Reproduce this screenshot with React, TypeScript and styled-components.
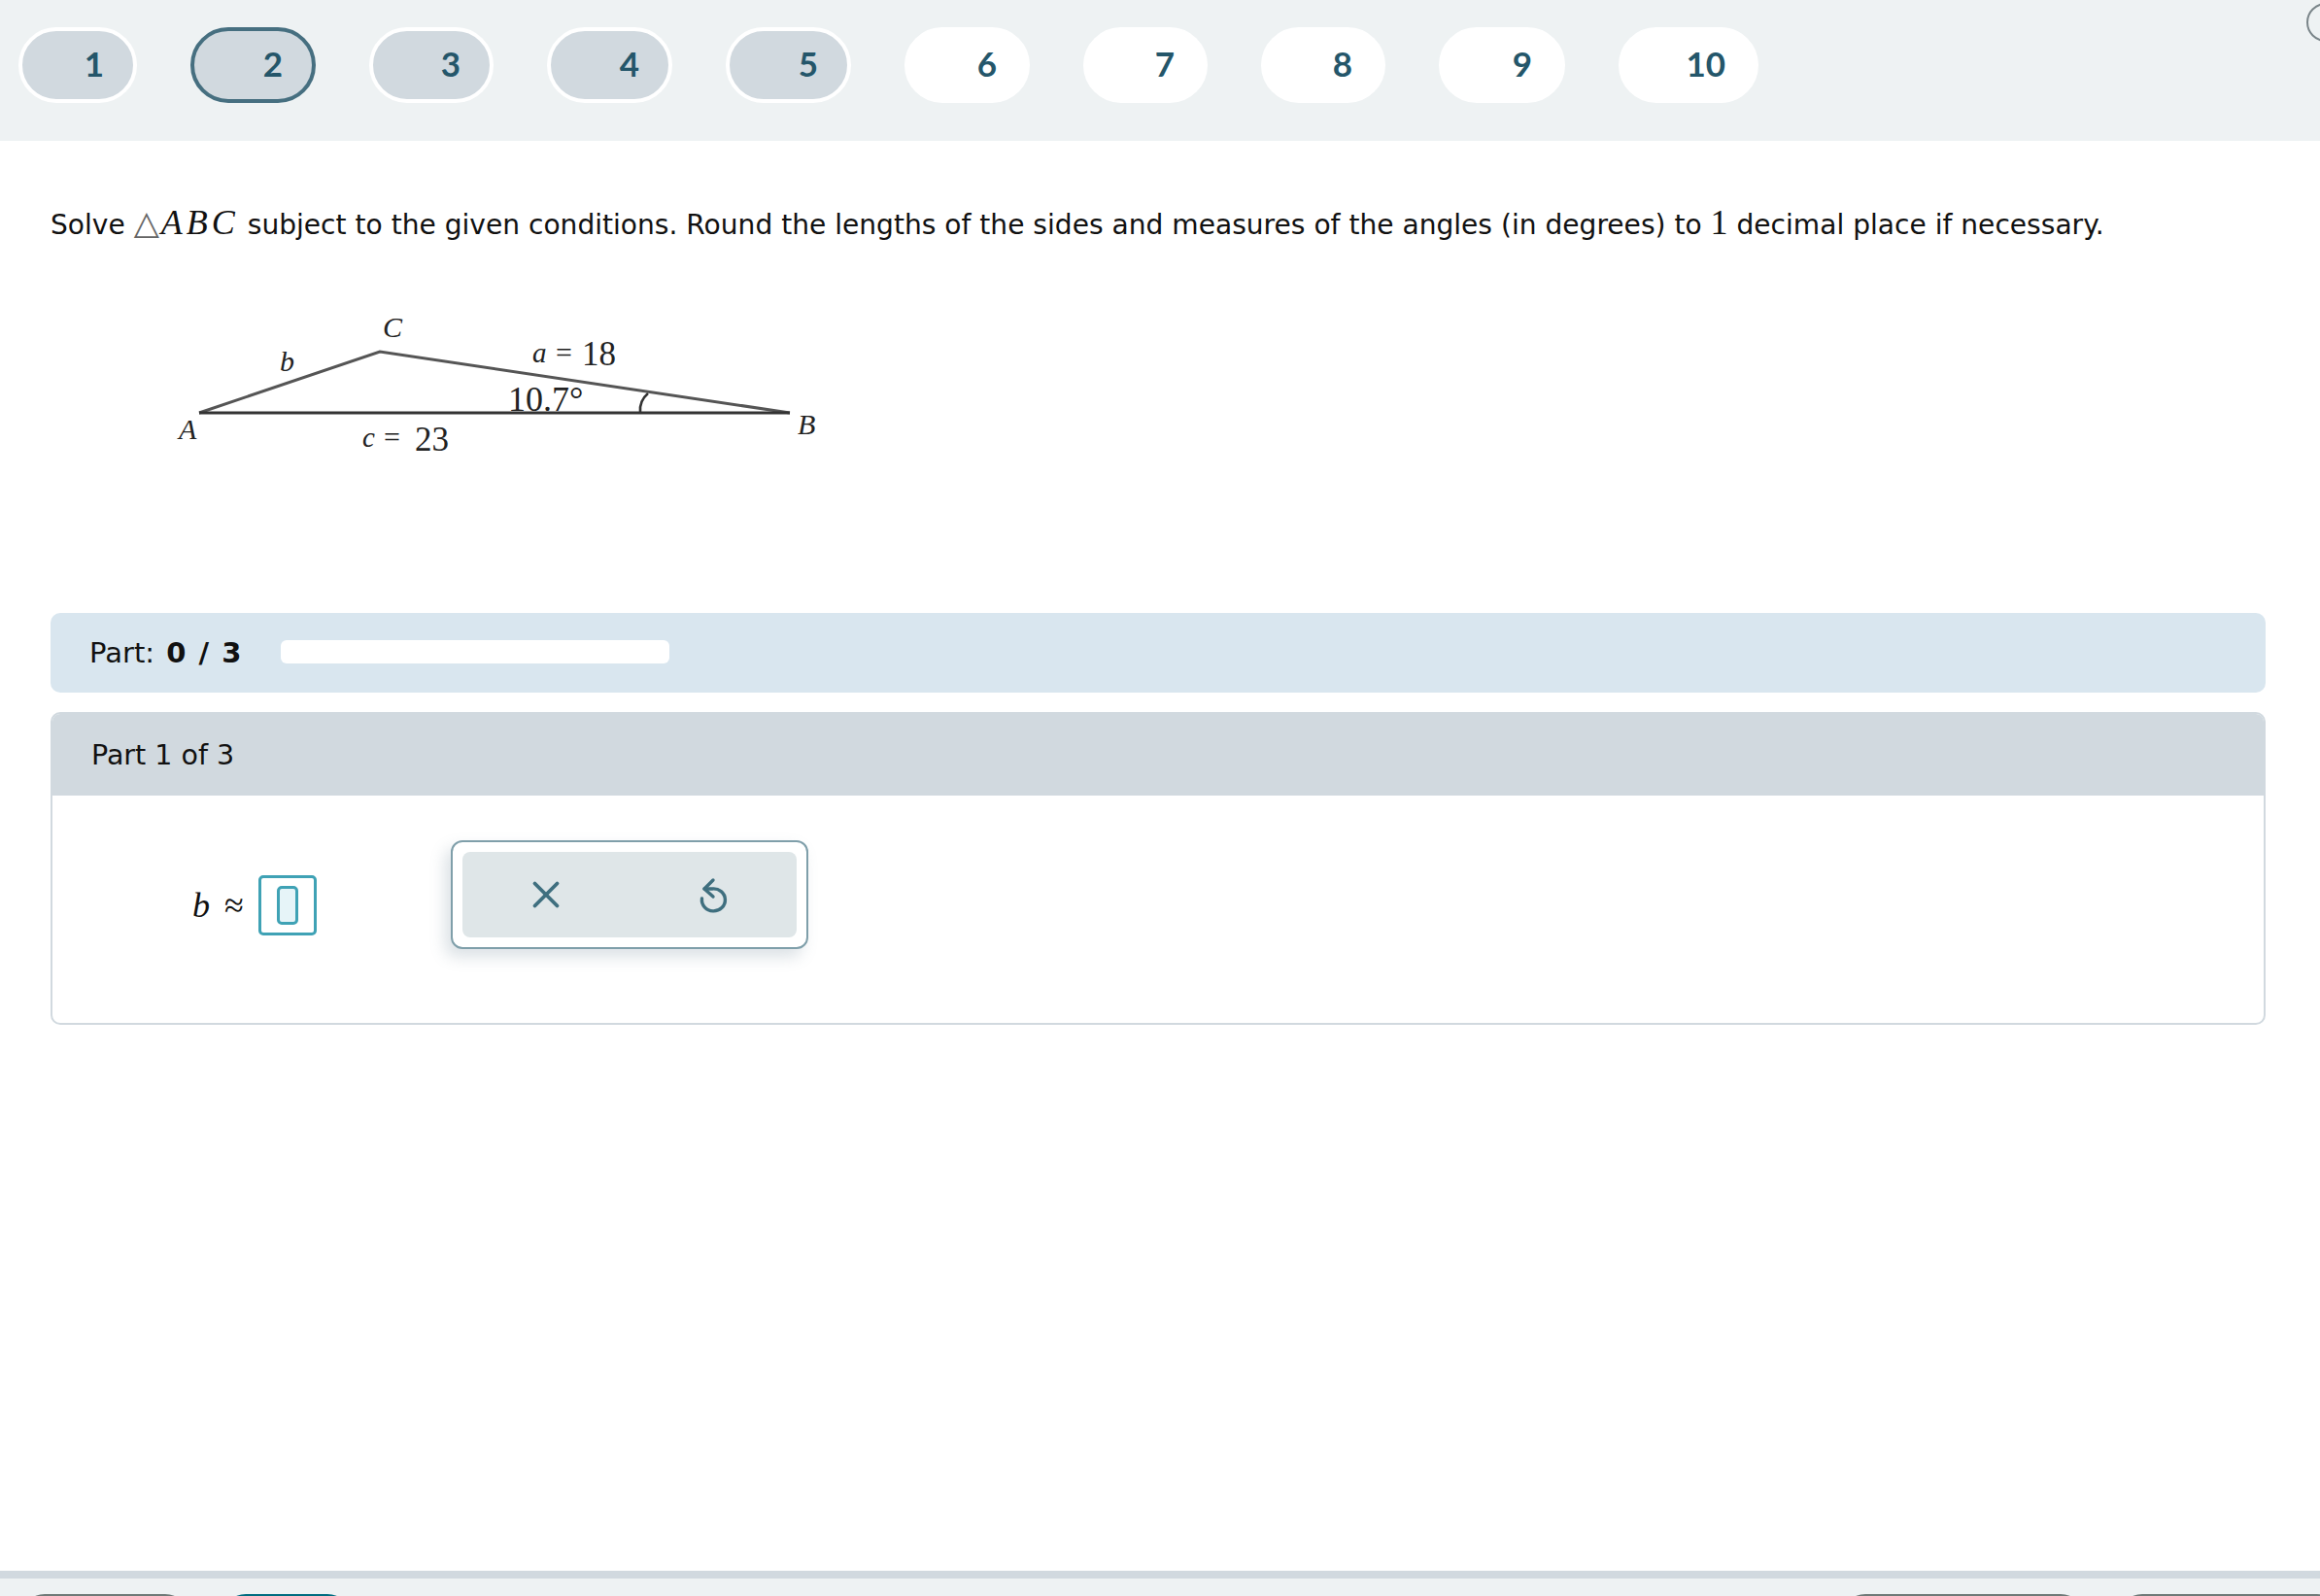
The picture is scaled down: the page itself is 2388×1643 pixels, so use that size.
import React from 'react';
import styled, { createGlobalStyle } from 'styled-components';
import { X } from 'lucide-react';

const GlobalStyle = createGlobalStyle`
  html, body {
    margin: 0;
    padding: 0;
    height: 100%;
    background: #fff;
    overflow: hidden;
  }
`;

const Page = styled.div`
  height: 100vh;
  display: flex;
  flex-direction: column;
  font-family: "DejaVu Sans", Verdana, sans-serif;
  color: #111;
  overflow: hidden;
`;

const TopBar = styled.div`
  position: relative;
  flex: none;
  height: 145px;
  box-sizing: border-box;
  padding: 28px 0 0 19px;
  display: flex;
  align-items: flex-start;
  gap: 55px;
  background: #eef2f3;
  overflow: hidden;
`;

const Pill = styled.div<{ $answered?: boolean; $current?: boolean; $w: number }>`
  box-sizing: border-box;
  width: ${p => p.$w}px;
  height: 78px;
  border-radius: 39px;
  display: flex;
  align-items: center;
  justify-content: flex-end;
  padding: 0 30px 5px 0;
  background: ${p => (p.$answered ? '#d1d9df' : '#fff')};
  border: 4px solid ${p => (p.$current ? '#466f80' : '#fff')};
  font-family: Lato, sans-serif;
  font-weight: 700;
  font-size: 35px;
  color: #24566a;
`;

const CornerCircle = styled.div`
  position: absolute;
  top: 3px;
  left: 2374px;
  width: 40px;
  height: 40px;
  box-sizing: border-box;
  border-radius: 50%;
  border: 2px solid #7a8589;
`;

const Content = styled.main`
  flex: 1;
  min-height: 0;
  padding: 64px 56px 0 52px;
`;

const Question = styled.p`
  margin: 0;
  font-size: 28.1px;
  line-height: 40px;
  white-space: nowrap;
`;

const MathText = styled.span`
  font-family: "Liberation Serif", serif;
  font-size: 36px;
`;

const MathItalic = styled(MathText)`
  font-style: italic;
  letter-spacing: 4px;
`;

const Delta = styled.span`
  color: #666;
  font-size: 34px;
  margin-right: 2px;
`;

const Figure = styled.svg`
  display: block;
  margin-top: 58px;
  margin-left: 128px;
`;

const ProgressBar = styled.div`
  margin-top: 151px;
  height: 82px;
  box-sizing: border-box;
  padding-left: 40px;
  display: flex;
  align-items: center;
  border-radius: 10px;
  background: #d9e6ef;
  font-size: 29px;
`;

const Score = styled.b`
  margin-left: 3px;
  word-spacing: 3px;
`;

const ProgressTrack = styled.div`
  width: 400px;
  height: 24px;
  margin: -2px 0 0 41px;
  border-radius: 6px;
  background: #fff;
`;

const PartCard = styled.section`
  margin-top: 20px;
  height: 322px;
  box-sizing: border-box;
  border: 2px solid #d1d9df;
  border-radius: 10px;
  overflow: hidden;
`;

const PartHeader = styled.div`
  height: 84px;
  display: flex;
  align-items: center;
  padding-left: 40px;
  background: #d1d9df;
  font-size: 28.5px;
`;

const PartBody = styled.div`
  display: flex;
  align-items: flex-start;
  padding: 82px 0 0 144px;
`;

const Answer = styled.div`
  display: flex;
  align-items: center;
  gap: 15px;
  height: 62px;
  font-family: "Liberation Serif", serif;
  font-size: 36px;
  word-spacing: 6px;
`;

const AnswerBox = styled.div`
  width: 60px;
  height: 62px;
  box-sizing: border-box;
  display: flex;
  align-items: center;
  justify-content: center;
  border: 3px solid #3fa2b5;
  border-radius: 5px;
`;

const Slot = styled.div`
  width: 22px;
  height: 40px;
  box-sizing: border-box;
  border: 3px solid #3fa2b5;
  border-radius: 5px;
  background: #e6f4f8;
`;

const Palette = styled.div`
  width: 368px;
  height: 112px;
  box-sizing: border-box;
  margin: -36px 0 0 138px;
  padding: 10px;
  background: #fff;
  border: 2px solid #7f9faa;
  border-radius: 12px;
  box-shadow: -6px 8px 16px rgba(90, 120, 135, 0.22);
`;

const PaletteInner = styled.div`
  height: 100%;
  display: grid;
  grid-template-columns: 1fr 1fr;
  align-items: center;
  justify-items: center;
  background: #dfe6e8;
  border-radius: 8px;
  color: #3f6f7f;
`;

const Footer = styled.footer`
  flex: none;
  height: 26px;
  box-sizing: border-box;
  border-top: 8px solid #d1d9df;
  background: #eef2f3;
  padding: 16px 0 0 22px;
  display: flex;
  justify-content: space-between;
  overflow: hidden;
`;

const FooterGroup = styled.div<{ $gap: number; $bleed?: boolean }>`
  display: flex;
  flex: none;
  gap: ${p => p.$gap}px;
  margin-right: ${p => (p.$bleed ? -21 : 0)}px;
`;

const FooterButton = styled.div<{ $w: number; $primary?: boolean }>`
  flex: none;
  width: ${p => p.$w}px;
  height: 70px;
  border-radius: 24px;
  background: ${p => (p.$primary ? '#006c80' : '#6f7a78')};
`;

const DiagramLabel = styled.text`
  font-family: "Liberation Serif", serif;
  fill: #222;
`;

const pills = [122, 129, 128, 129, 129, 129, 128, 128, 130, 144];

const UndoIcon = () => (
  <svg width="70" height="60" viewBox="0 0 70 60" fill="none" stroke="currentColor" strokeWidth="3.4" strokeLinecap="round" strokeLinejoin="round">
    <path d="M35 15 L26 24 L35 32" />
    <path d="M26 24 H34 A12 11.5 0 1 1 23.5 34" />
  </svg>
);

const Diagram = () => (
  <Figure width="700" height="170" viewBox="180 310 700 170">
    <g fill="none" stroke="#555" strokeWidth="3">
      <path d="M205 425 L391 362 L813 425" />
      <path d="M205 425 H813" stroke="#333" />
      <path d="M659 425 C658 416 661 410 667 405" strokeWidth="2.6" stroke="#333" />
    </g>
    <DiagramLabel x="394" y="347" fontSize="30" fontStyle="italic">C</DiagramLabel>
    <DiagramLabel x="288" y="382" fontSize="30" fontStyle="italic">b</DiagramLabel>
    <DiagramLabel x="548" y="373" fontSize="29" fontStyle="italic">a</DiagramLabel>
    <DiagramLabel x="572" y="373" fontSize="30">=</DiagramLabel>
    <DiagramLabel x="599" y="376" fontSize="35">18</DiagramLabel>
    <DiagramLabel x="523" y="423" fontSize="36">10.7°</DiagramLabel>
    <DiagramLabel x="184" y="452" fontSize="30" fontStyle="italic">A</DiagramLabel>
    <DiagramLabel x="373" y="460" fontSize="29" fontStyle="italic">c</DiagramLabel>
    <DiagramLabel x="395" y="460" fontSize="30">=</DiagramLabel>
    <DiagramLabel x="427" y="464" fontSize="35">23</DiagramLabel>
    <DiagramLabel x="821" y="447" fontSize="30" fontStyle="italic">B</DiagramLabel>
  </Figure>
);

export default function App() {
  return (
    <Page>
      <GlobalStyle />
      <TopBar>
        {pills.map((w, i) => (
          <Pill key={i} $w={w} $answered={i < 5} $current={i === 1}>
            {i + 1}
          </Pill>
        ))}
        <CornerCircle />
      </TopBar>
      <Content>
        <Question>
          Solve <Delta>△</Delta>
          <MathItalic>ABC</MathItalic> subject to the given conditions. Round the lengths of the sides and
          measures of the angles (in degrees) to <MathText>1</MathText> decimal place if necessary.
        </Question>
        <Diagram />
        <ProgressBar>
          <span>
            Part: <Score>0 / 3</Score>
          </span>
          <ProgressTrack />
        </ProgressBar>
        <PartCard>
          <PartHeader>Part 1 of 3</PartHeader>
          <PartBody>
            <Answer>
              <span>
                <i>b</i> ≈
              </span>
              <AnswerBox>
                <Slot />
              </AnswerBox>
            </Answer>
            <Palette>
              <PaletteInner>
                <X size={46} strokeWidth={2} />
                <UndoIcon />
              </PaletteInner>
            </Palette>
          </PartBody>
        </PartCard>
      </Content>
      <Footer>
        <FooterGroup $gap={35}>
          <FooterButton $w={172} />
          <FooterButton $w={132} $primary />
        </FooterGroup>
        <FooterGroup $gap={36} $bleed>
          <FooterButton $w={249} />
          <FooterButton $w={228} />
        </FooterGroup>
      </Footer>
    </Page>
  );
}
